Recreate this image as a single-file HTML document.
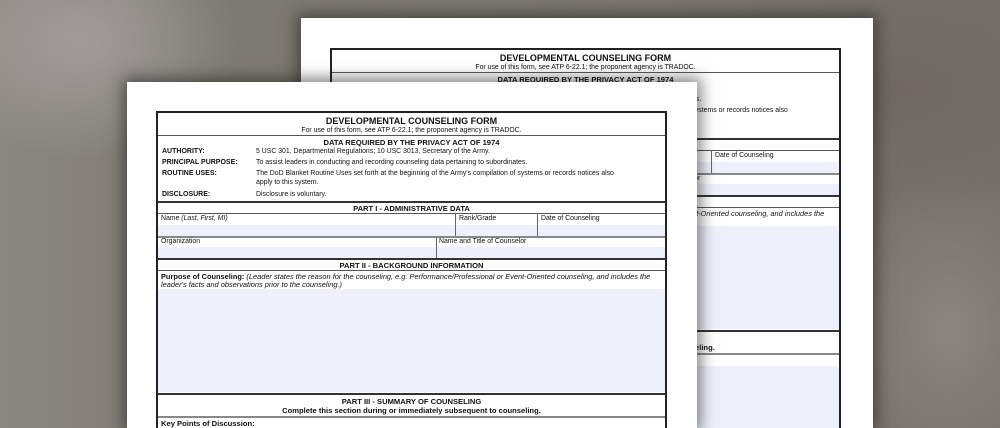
<!DOCTYPE html>
<html style="width:1000px;height:428px;overflow:hidden"><head><meta charset="utf-8"><style>
*{margin:0;padding:0;box-sizing:border-box}
body{width:1000px;height:428px;overflow:hidden;position:relative;font-family:"Liberation Sans",Arial,sans-serif;color:#111;
background:
radial-gradient(ellipse 160px 120px at 80px 40px,#a29d9c 0%,rgba(160,155,154,0) 100%),
radial-gradient(ellipse 200px 140px at 900px 90px,#6f6864 0%,rgba(110,104,100,0) 100%),
radial-gradient(ellipse 120px 160px at 950px 330px,#8a857d 0%,rgba(138,133,125,0) 100%),
linear-gradient(90deg,#8a8680 0%,#7d7a72 20%,#7a776e 60%,#75716a 100%);}
.page{position:absolute;background:#fff;box-shadow:0 0 14px 4px rgba(30,28,25,.55)}
.form{position:absolute;width:511px;border:2px solid #222;border-bottom:none;overflow:hidden}
.form div{position:absolute;white-space:nowrap}
.c{left:0;right:0;text-align:center}
.h{font-weight:bold;font-size:7.6px}
.t{font-size:6.9px}
.hl{left:0;right:0;height:0;border-top:1px solid #555}
.hk{left:0;right:0;height:0;border-top:2px solid #333}
.vl{width:0;border-left:1px solid #666}
.bl{background:#eef1fc}
.lab{left:4px;font-weight:bold;font-size:7px}
.val{left:98px;font-size:6.9px}
.p{font-size:7.4px}
</style></head><body>

<div class="page" style="left:301px;top:18px;width:572px;height:410px"></div>
<div class="form" style="left:330px;top:48px;height:380px">
<div class="c" style="top:3px;font-weight:bold;font-size:9px">DEVELOPMENTAL COUNSELING FORM</div>
<div class="c t" style="top:14px">For use of this form, see ATP 6-22.1; the proponent agency is TRADOC.</div>
<div class="hl" style="top:22px"></div>
<div class="c h" style="top:25px">DATA REQUIRED BY THE PRIVACY ACT OF 1974</div>
<div class="lab" style="top:35px">AUTHORITY:</div><div class="val" style="top:35px">5 USC 301, Departmental Regulations; 10 USC 3013, Secretary of the Army.</div>
<div class="lab" style="top:46px">PRINCIPAL PURPOSE:</div><div class="val" style="top:46px">To assist leaders in conducting and recording counseling data pertaining to subordinates.</div>
<div class="lab" style="top:57px">ROUTINE USES:</div><div class="val" style="top:57px">The DoD Blanket Routine Uses set forth at the beginning of the Army's compilation of systems or records notices also</div>
<div class="val" style="top:66px">apply to this system.</div>
<div class="lab" style="top:78px">DISCLOSURE:</div><div class="val" style="top:78px">Disclosure is voluntary.</div>
<div class="hk" style="top:88px"></div>
<div class="c h" style="top:91px">PART I - ADMINISTRATIVE DATA</div>
<div class="hl" style="top:100px"></div>
<div class="bl" style="left:0;right:0;top:112px;height:11px"></div>
<div class="t" style="left:3px;top:102px">Name <i>(Last, First, MI)</i></div>
<div class="t" style="left:301px;top:102px">Rank/Grade</div>
<div class="t" style="left:383px;top:102px">Date of Counseling</div>
<div class="vl" style="left:297px;top:100px;height:23px"></div>
<div class="vl" style="left:379px;top:100px;height:23px"></div>
<div class="hl" style="top:123px;border-top:2px solid #888"></div>
<div class="bl" style="left:0;right:0;top:134px;height:11px"></div>
<div class="t" style="left:3px;top:125px">Organization</div>
<div class="t" style="left:281px;top:125px">Name and Title of Counselor</div>
<div class="vl" style="left:278px;top:124px;height:22px"></div>
<div class="hk" style="top:145px"></div>
<div class="c h" style="top:148px">PART II - BACKGROUND INFORMATION</div>
<div class="hl" style="top:157px"></div>
<div class="p" style="left:3px;top:159px"><b>Purpose of Counseling:</b> <i>(Leader states the reason for the counseling, e.g. Performance/Professional or Event-Oriented counseling, and includes the</i></div>
<div class="p" style="left:3px;top:167px"><i>leader's facts and observations prior to the counseling.)</i></div>
<div class="bl" style="left:0;right:0;top:176px;height:103px"></div>
<div class="hk" style="top:280px"></div>
<div class="c h" style="top:284px">PART III - SUMMARY OF COUNSELING</div>
<div class="c h" style="top:293px">Complete this section during or immediately subsequent to counseling.</div>
<div class="hl" style="top:303px;border-top:2px solid #888"></div>
<div class="h" style="left:3px;top:306px">Key Points of Discussion:</div>
<div class="bl" style="left:0;right:0;top:316px;height:64px"></div>
</div>

<div class="page" style="left:127px;top:82px;width:570px;height:346px"></div>
<div class="form" style="left:156px;top:111px;height:317px">
<div class="c" style="top:3px;font-weight:bold;font-size:9px">DEVELOPMENTAL COUNSELING FORM</div>
<div class="c t" style="top:14px">For use of this form, see ATP 6-22.1; the proponent agency is TRADOC.</div>
<div class="hl" style="top:22px"></div>
<div class="c h" style="top:25px">DATA REQUIRED BY THE PRIVACY ACT OF 1974</div>
<div class="lab" style="top:35px">AUTHORITY:</div><div class="val" style="top:35px">5 USC 301, Departmental Regulations; 10 USC 3013, Secretary of the Army.</div>
<div class="lab" style="top:46px">PRINCIPAL PURPOSE:</div><div class="val" style="top:46px">To assist leaders in conducting and recording counseling data pertaining to subordinates.</div>
<div class="lab" style="top:57px">ROUTINE USES:</div><div class="val" style="top:57px">The DoD Blanket Routine Uses set forth at the beginning of the Army's compilation of systems or records notices also</div>
<div class="val" style="top:66px">apply to this system.</div>
<div class="lab" style="top:78px">DISCLOSURE:</div><div class="val" style="top:78px">Disclosure is voluntary.</div>
<div class="hk" style="top:88px"></div>
<div class="c h" style="top:91px">PART I - ADMINISTRATIVE DATA</div>
<div class="hl" style="top:100px"></div>
<div class="bl" style="left:0;right:0;top:112px;height:11px"></div>
<div class="t" style="left:3px;top:102px">Name <i>(Last, First, MI)</i></div>
<div class="t" style="left:301px;top:102px">Rank/Grade</div>
<div class="t" style="left:383px;top:102px">Date of Counseling</div>
<div class="vl" style="left:297px;top:100px;height:23px"></div>
<div class="vl" style="left:379px;top:100px;height:23px"></div>
<div class="hl" style="top:123px;border-top:2px solid #888"></div>
<div class="bl" style="left:0;right:0;top:134px;height:11px"></div>
<div class="t" style="left:3px;top:125px">Organization</div>
<div class="t" style="left:281px;top:125px">Name and Title of Counselor</div>
<div class="vl" style="left:278px;top:124px;height:22px"></div>
<div class="hk" style="top:145px"></div>
<div class="c h" style="top:148px">PART II - BACKGROUND INFORMATION</div>
<div class="hl" style="top:157px"></div>
<div class="p" style="left:3px;top:159px"><b>Purpose of Counseling:</b> <i>(Leader states the reason for the counseling, e.g. Performance/Professional or Event-Oriented counseling, and includes the</i></div>
<div class="p" style="left:3px;top:167px"><i>leader's facts and observations prior to the counseling.)</i></div>
<div class="bl" style="left:0;right:0;top:176px;height:103px"></div>
<div class="hk" style="top:280px"></div>
<div class="c h" style="top:284px">PART III - SUMMARY OF COUNSELING</div>
<div class="c h" style="top:293px">Complete this section during or immediately subsequent to counseling.</div>
<div class="hl" style="top:303px;border-top:2px solid #888"></div>
<div class="h" style="left:3px;top:306px">Key Points of Discussion:</div>
</div>
</body></html>
